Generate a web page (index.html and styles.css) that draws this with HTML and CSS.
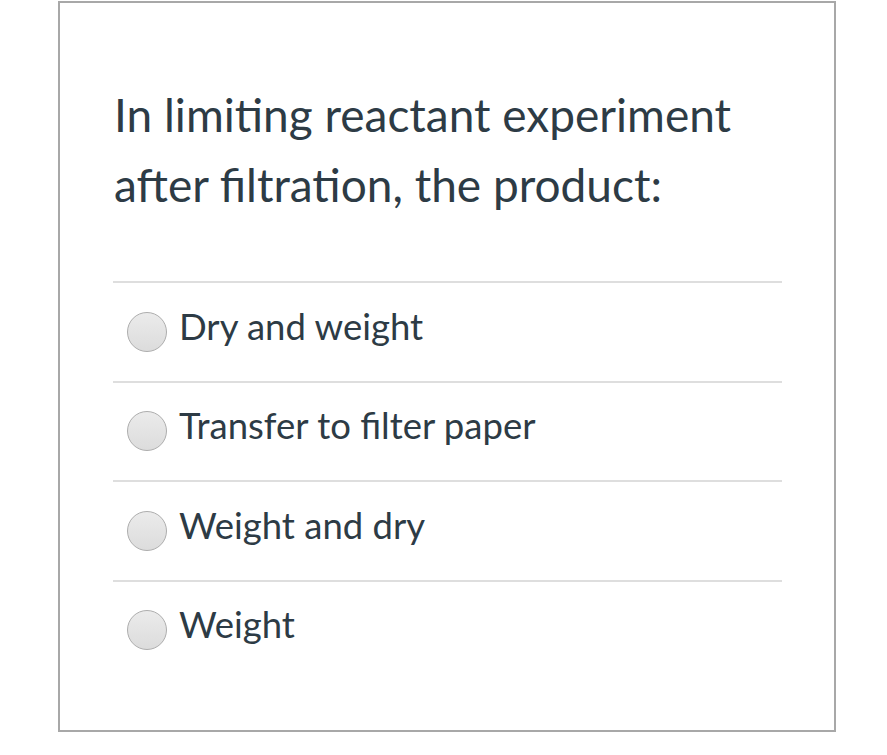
FILE: index.html
```html
<!DOCTYPE html>
<html>
<head>
<meta charset="utf-8">
<link rel="stylesheet" href="styles.css">
</head>
<body>
<div class="card">
  <div class="question">In limiting reactant experiment after filtration, the product:</div>
  <div class="answers">
    <label class="answer"><span class="radio"></span><span class="label">Dry and weight</span></label>
    <label class="answer"><span class="radio"></span><span class="label">Transfer to filter paper</span></label>
    <label class="answer"><span class="radio"></span><span class="label">Weight and dry</span></label>
    <label class="answer"><span class="radio"></span><span class="label">Weight</span></label>
  </div>
</div>
</body>
</html>
```
FILE: styles.css
```css
html, body { margin: 0; padding: 0; background: #fff; }
body { font-family: Lato, "Open Sans", sans-serif; color: #2d3b45; }
.card {
  margin: 1px 0 0 58px;
  width: 668px;
  height: 727px;
  border: 2px solid #a8a8a8;
  padding: 0 52px 0 54px;
  box-sizing: content-box;
}
.question {
  font-size: 46px;
  line-height: 70px;
  padding-top: 77px;
  padding-bottom: 61px;
}
.answers { margin-left: -1px; }
.answer {
  display: flex;
  align-items: center;
  height: 97.5px;
  border-top: 2px solid #dedede;
}
.radio {
  width: 38px;
  height: 38px;
  border-radius: 50%;
  border: 1px solid #adadad;
  background: linear-gradient(#ebebeb, #dcdcdc);
  margin-left: 14px;
  margin-right: 12px;
  flex: none;
}
.label {
  font-size: 36.5px;
  padding-bottom: 12px;
}
```
